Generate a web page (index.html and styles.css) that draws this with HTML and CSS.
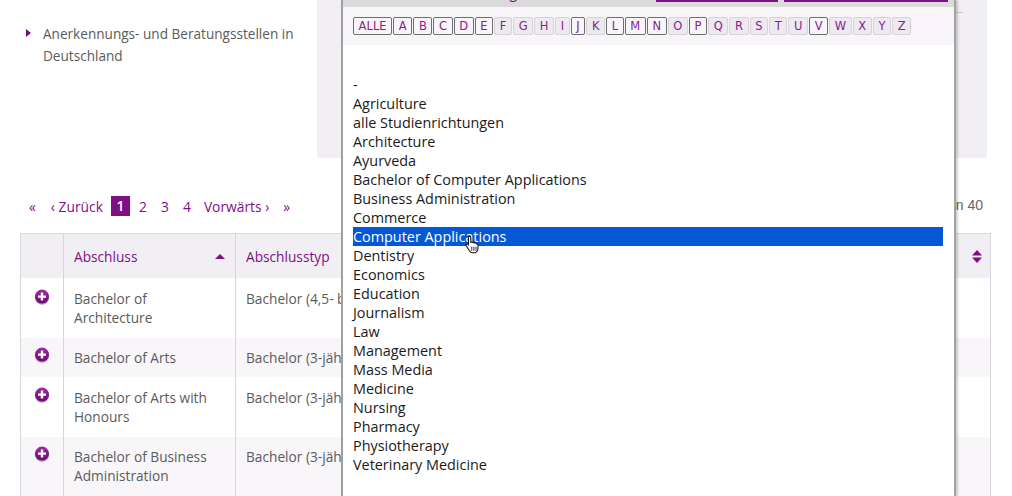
FILE: index.html
```html
<!DOCTYPE html>
<html lang="de">
<head>
<meta charset="utf-8">
<title>Abschlüsse</title>
<link rel="stylesheet" href="styles.css">
</head>
<body>
<div class="page">
  <div class="top">
    <aside class="side">
      <ul class="side-list">
        <li><svg class="tri" width="5" height="8" viewBox="0 0 5 8"><path d="M0 0L5 4L0 8Z"/></svg><a>Anerkennungs- und Beratungsstellen in Deutschland</a></li>
      </ul>
    </aside>
    <div class="panel"><div class="panel-rule"></div></div>
  </div>
  <div class="pager-row">
    <nav class="pager">
      <a class="p-first">«</a><a class="p-prev">‹ Zurück</a><b class="p-cur">1</b><a class="p-n">2</a><a class="p-n">3</a><a class="p-n">4</a><a class="p-next">Vorwärts ›</a><a class="p-last">»</a>
    </nav>
    <span class="count">von 40</span>
  </div>
  <table class="grid">
    <thead>
      <tr>
        <th class="c0"></th>
        <th class="c1"><span class="th-in">Abschluss<svg width="10" height="5" viewBox="0 0 10 5"><path d="M5 0L10 5H0Z"/></svg></span></th>
        <th class="c2">Abschlusstyp</th>
        <th class="c3"><span class="th-end"><svg width="10" height="13" viewBox="0 0 10 13"><path d="M5 0L10 5.500H0ZM0 7.500H10L5 13Z"/></svg></span></th>
      </tr>
    </thead>
    <tbody>
      <tr class="r1"><td class="c0"><svg class="plus" viewBox="0 0 16 16"><use href="#plus"/></svg></td><td>Bachelor of Architecture</td><td>Bachelor (4,5- bis 5-jährig)</td><td></td></tr>
      <tr class="r2 alt"><td class="c0"><svg class="plus" viewBox="0 0 16 16"><use href="#plus"/></svg></td><td>Bachelor of Arts</td><td>Bachelor (3-jährig)</td><td></td></tr>
      <tr class="r3"><td class="c0"><svg class="plus" viewBox="0 0 16 16"><use href="#plus"/></svg></td><td>Bachelor of Arts with Honours</td><td>Bachelor (3-jährig)</td><td></td></tr>
      <tr class="r4 alt"><td class="c0"><svg class="plus" viewBox="0 0 16 16"><use href="#plus"/></svg></td><td>Bachelor of Business Administration</td><td>Bachelor (3-jährig)</td><td></td></tr>
    </tbody>
  </table>
  <svg class="defs" width="0" height="0">
    <defs>
      <linearGradient id="plusfill" x1="0" y1="0" x2="0" y2="1">
        <stop offset="0" stop-color="#a02ba8"/>
        <stop offset="1" stop-color="#6d0673"/>
      </linearGradient>
    </defs>
    <symbol id="plus" viewBox="0 0 16 16">
      <circle cx="8" cy="8.600" r="7.200" fill="#2a0a30" opacity=".4"/>
      <circle cx="8" cy="7.600" r="7" fill="url(#plusfill)"/>
      <path d="M6.800 3.600H9.200V6.400H12V8.800H9.200V11.600H6.800V8.800H4V6.400H6.800Z" fill="#fff"/>
    </symbol>
  </svg>

  <div class="modal">
    <div class="modal-head"><span class="tab-a">Studienrichtung</span><span class="tab-b"></span><span class="tab-c"></span></div>
    <div class="alpha">
      <a class="on">ALLE</a><a class="on">A</a><a class="on">B</a><a class="on">C</a><a class="on">D</a><a class="on">E</a><a>F</a><a>G</a><a>H</a><a>I</a><a class="on">J</a><a>K</a><a class="on">L</a><a class="on">M</a><a class="on">N</a><a>O</a><a class="on">P</a><a>Q</a><a>R</a><a>S</a><a>T</a><a>U</a><a class="on">V</a><a>W</a><a>X</a><a>Y</a><a>Z</a>
    </div>
    <ul class="opts">
      <li>-</li>
      <li>Agriculture</li>
      <li>alle Studienrichtungen</li>
      <li>Architecture</li>
      <li>Ayurveda</li>
      <li>Bachelor of Computer Applications</li>
      <li>Business Administration</li>
      <li>Commerce</li>
      <li class="sel">Computer Applications</li>
      <li>Dentistry</li>
      <li>Economics</li>
      <li>Education</li>
      <li>Journalism</li>
      <li>Law</li>
      <li>Management</li>
      <li>Mass Media</li>
      <li>Medicine</li>
      <li>Nursing</li>
      <li>Pharmacy</li>
      <li>Physiotherapy</li>
      <li>Veterinary Medicine</li>
    </ul>
    <svg class="cursor" width="15" height="19" viewBox="0 0 14 18"><path d="M4 1.200c.9 0 1.400.6 1.400 1.400V7l.6-.2c.7-.2 1.300 0 1.600.5.6-.4 1.400-.2 1.700.4.7-.3 1.500 0 1.700.7.5-.1 1.200.3 1.200 1.100v3c0 2.200-1.400 4.300-3.700 4.300H7c-1.300 0-2-.6-2.700-1.700L1.200 10.500c-.4-.7-.2-1.400.3-1.700.6-.4 1.200-.2 1.700.3V2.600C2.600 1.800 3.100 1.200 4 1.200Z" fill="#fff" stroke="#111" stroke-width="1"/><path d="M6.300 11v4M8.300 11v4M10.300 11v4" stroke="#111" stroke-width=".8"/></svg>
  </div>
</div>
</body>
</html>
```
FILE: styles.css
```css
* { box-sizing: border-box; }
html, body { margin: 0; padding: 0; }
body { width: 1012px; height: 496px; overflow: hidden; background: #fff; font-family: "Open Sans", sans-serif; font-size: 14px; color: #555; }
.page { position: relative; width: 1012px; height: 496px; overflow: hidden; }
a { color: #7f0f86; text-decoration: none; }

.top { display: flex; height: 158px; }
.side { width: 317px; padding: 23px 20px 0 26px; }
.side-list { list-style: none; margin: 0; padding: 0; }
.side-list li { display: flex; line-height: 22px; }
.side-list a { color: #5b5b5b; font-size: 13.6px; margin-left: 12px; width: 265px; flex: none; }
.tri { fill: #7a0a82; margin-top: 6px; flex: none; }
.panel { width: 670px; background: #f1eff3; padding-top: 12px; }
.panel-rule { width: 16px; height: 1px; margin-left: 630px; background: #cfcdd2; }

.pager-row { display: flex; justify-content: space-between; align-items: center; height: 22px; margin-top: 37px; padding: 0 29px 0 29px; }
.pager { display: flex; align-items: center; font-size: 13.800px; }
.pager a { color: #7f0f86; }
.p-prev { margin-left: 15px; }
.p-cur { background: #7f0f86; color: #fff; font-weight: 600; width: 19px; height: 20px; line-height: 20px; text-align: center; margin-left: 8px; }
.p-n { margin-left: 9px; width: 13px; }
.p-next { margin-left: 8px; }
.p-last { margin-left: 14px; }
.count { color: #666; font-family: "Liberation Sans", sans-serif; font-size: 14px; margin-bottom: 3px; }

.grid { border-collapse: collapse; table-layout: fixed; width: 970px; margin: 16px 0 0 20px; font-size: 13.700px; }
.grid th, .grid td { border: 1px solid #d8d6db; border-width: 0 1px; vertical-align: top; text-align: left; font-weight: 400; padding: 11px 10px 0; line-height: 19px; color: #5b5b5b; }
.grid thead tr { height: 44px; background: #f1eff3; }
.grid thead th { border-top: 1px solid #dcdadf; color: #7f0f86; padding-top: 13px; }
.c0 { width: 43px; }
.c1 { width: 172px; }
.c2 { width: 680px; }
.c3 { width: 75px; }
.grid th.c3 { padding-right: 8px; }
.th-in { display: flex; justify-content: space-between; align-items: center; }
.th-in svg, .th-end svg { fill: #7f0f86; }
.th-end { display: flex; justify-content: flex-end; margin: 3px 0 0; }
.r1 { height: 60px; }
.r2 { height: 39px; }
.r3 { height: 60px; }
.r4 { height: 60px; }
.r2 td { padding-top: 10px; }
.r3 td { padding-top: 11px; }
.r4 td { padding-top: 10px; }
.alt { background: #f8f6f9; }
.grid td.c0 { padding: 11px 0 0 13px; line-height: 0; }
.grid .r2 td.c0, .grid .r4 td.c0 { padding-top: 9px; }
.grid .r3 td.c0 { padding-top: 10px; }
.plus { width: 16px; height: 16px; }
.defs { position: absolute; }

.modal { position: absolute; left: 341px; top: 0; width: 615px; height: 496px; background: #fff; border-left: 2px solid #a0a0a0; border-right: 2px solid #a3a3a3; box-shadow: 2px 0 2px rgba(0,0,0,.18); }
.modal-head { height: 7px; background: #dadada; overflow: hidden; position: relative; }
.tab-a { position: absolute; left: 70px; top: -17px; font-size: 14px; line-height: 20px; color: #7f0f86; }
.tab-b { position: absolute; left: 313px; top: 0; width: 122px; height: 2px; background: #7f0f86; }
.tab-c { position: absolute; left: 441px; top: 0; width: 164px; height: 2px; background: #7f0f86; }
.alpha { display: flex; align-items: center; gap: 1px; height: 38px; padding: 0 0 0 10px; background: #f7f5f8; }
.alpha a { display: block; height: 18px; border: 1px solid #d7d4d9; border-radius: 2px; background: #eceaee; color: #8a1c91; font-family: "DejaVu Sans", sans-serif; font-size: 11.500px; line-height: 16px; text-align: center; padding: 0 4.620px; }
.alpha a.on { border-color: #6f6f6f; background: #f7f5f8; }
.opts { list-style: none; margin: 0; padding: 30px 0 0 10px; width: 600px; font-size: 14.400px; line-height: 19px; color: #1a1a1a; }
.opts li { height: 19px; white-space: nowrap; }
.opts .sel { background: #0458d6; color: #fff; }
.cursor { position: absolute; left: 122px; top: 235px; }
```
